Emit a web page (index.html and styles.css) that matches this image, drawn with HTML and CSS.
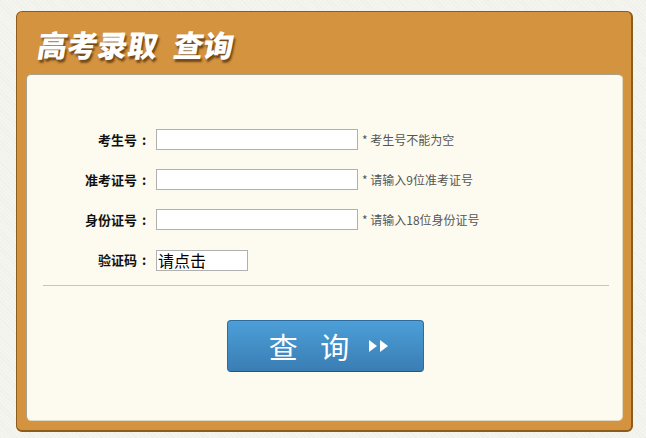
FILE: index.html
```html
<!DOCTYPE html>
<html lang="zh-CN">
<head>
<meta charset="utf-8">
<title>高考录取 查询</title>
<link rel="stylesheet" href="styles.css">
</head>
<body>
<div class="frame">
  <div class="header">
    <h1 class="title"><span>高考录取</span><span class="t2">查询</span></h1>
  </div>
  <div class="panel">
    <form class="form">
      <div class="row">
        <label class="label"><span>考生号</span><span class="colon">:</span></label>
        <input class="field" type="text">
        <span class="hint">* 考生号不能为空</span>
      </div>
      <div class="row">
        <label class="label"><span>准考证号</span><span class="colon">:</span></label>
        <input class="field" type="text">
        <span class="hint">* 请输入9位准考证号</span>
      </div>
      <div class="row">
        <label class="label"><span>身份证号</span><span class="colon">:</span></label>
        <input class="field" type="text">
        <span class="hint">* 请输入18位身份证号</span>
      </div>
      <div class="row">
        <label class="label"><span>验证码</span><span class="colon">:</span></label>
        <div class="captcha">请点击</div>
      </div>
    </form>
    <div class="divider"></div>
    <div class="actions">
      <button class="btn" type="button"><span class="btn-text">查 询</span><svg class="arrows" width="21" height="14" viewBox="0 0 21 14"><polygon points="1,1 9,7 1,13" fill="#fff"/><polygon points="12,1 20,7 12,13" fill="#fff"/></svg></button>
    </div>
  </div>
</div>
</body>
</html>
```
FILE: styles.css
```css
* { box-sizing: border-box; }
html, body { margin: 0; padding: 0; }
body {
  width: 646px;
  height: 438px;
  overflow: hidden;
  background-color: #f5f5ef;
  background-image: repeating-linear-gradient(45deg, rgba(0,0,0,0.02) 0 1px, transparent 1px 3px);
  font-family: "Noto Sans CJK SC", "Noto Sans", sans-serif;
  padding: 11px 0 0 16px;
}
.frame {
  width: 617px;
  height: 421px;
  background: #d4943f;
  border: 1px solid #8d5b1c;
  border-right-width: 2px;
  border-bottom-width: 2px;
  border-radius: 6px;
  display: flex;
  flex-direction: column;
  padding: 0 8px 9px 9px;
}
.header {
  height: 62px;
  display: flex;
  align-items: center;
  padding-left: 12px;
}
.title {
  margin: 0;
  font-size: 30px;
  font-weight: 900;
  color: #fff;
  line-height: 1;
  text-shadow: 2px 3px 2px rgba(60, 30, 0, 0.65);
  display: flex;
  gap: 16px;
  transform: skewX(-9deg);
  position: relative;
  top: 1px;
}
.panel {
  flex: 1;
  background: #fdfbef;
  border: 1px solid #a8a090;
  border-right-color: #e0d8c0;
  border-bottom-color: #e0d8c0;
  border-radius: 5px;
  display: flex;
  flex-direction: column;
  padding-top: 54px;
}
.form {
  display: flex;
  flex-direction: column;
  gap: 19px;
  margin: 0;
}
.row {
  display: flex;
  align-items: center;
  height: 21px;
}
.label {
  width: 124px;
  margin-right: 5px;
  display: flex;
  justify-content: flex-end;
  font-size: 13px;
  font-weight: bold;
  color: #111;
}
.colon {
  width: 14px;
  text-align: center;
}
.field {
  width: 202px;
  height: 21px;
  border: 1px solid #b0b0b0;
  background: #fff;
  margin: 0;
  padding: 0 3px;
  font-size: 13px;
}
.hint {
  margin-left: 4px;
  font-size: 12px;
  color: #555;
}
.captcha {
  width: 92px;
  height: 21px;
  border: 1px solid #b0b0b0;
  background: #fff;
  font-size: 16px;
  line-height: 19px;
  color: #000;
  padding-left: 1px;
  margin-top: 1px;
}
.divider {
  height: 1px;
  background: #cfc6a2;
  margin: 15px 13px 0 16px;
}
.actions {
  display: flex;
  justify-content: center;
  padding-top: 34px;
  padding-left: 2px;
}
.btn {
  width: 197px;
  height: 52px;
  border: 1px solid #2f6b9d;
  border-bottom-color: #24557f;
  border-radius: 4px;
  background: linear-gradient(#4c9fd8, #3a7db4);
  color: #fff;
  font-family: "Noto Sans CJK SC", sans-serif;
  display: flex;
  align-items: center;
  justify-content: center;
  padding: 0 0 0 7px;
  cursor: pointer;
}
.btn-text {
  font-size: 29px;
  letter-spacing: 8px;
  line-height: 1;
}
.arrows {
  margin-left: 11px;
}
```
